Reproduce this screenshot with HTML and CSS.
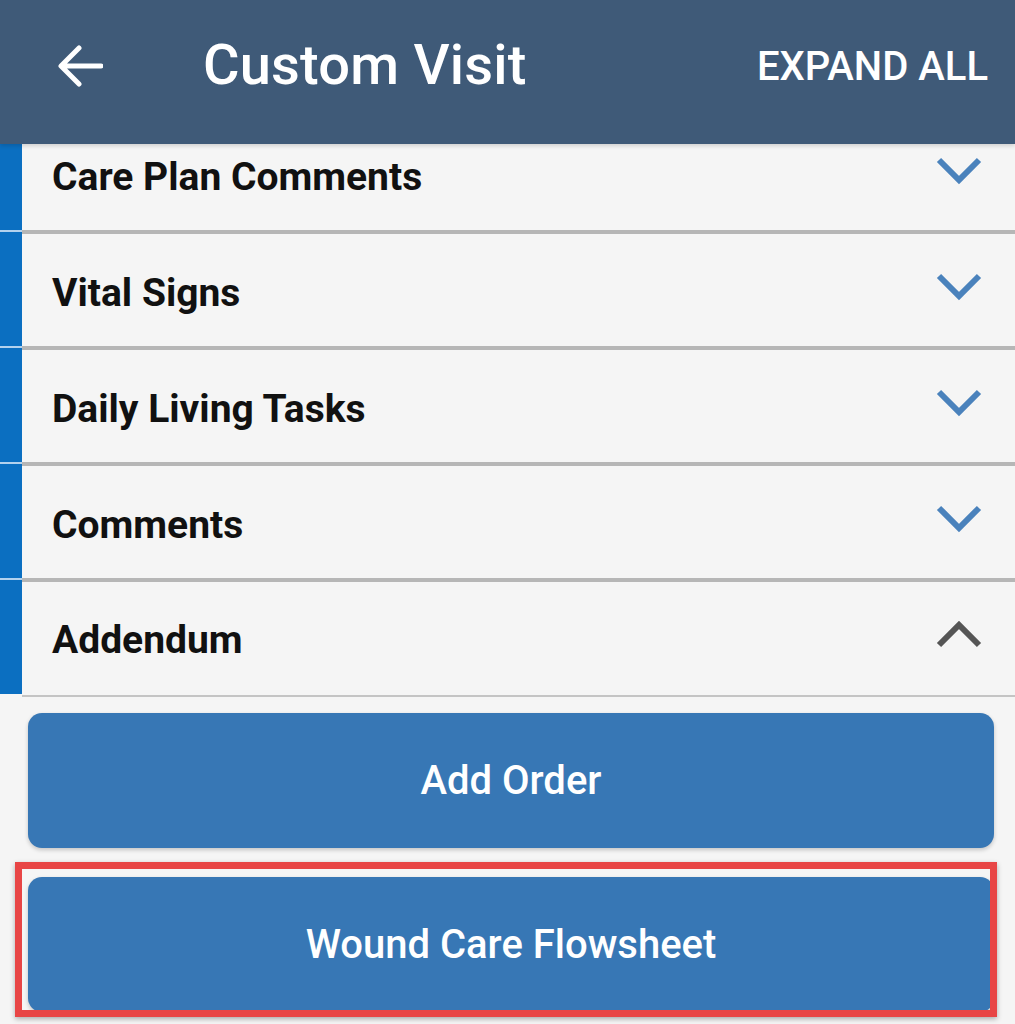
FILE: index.html
```html
<!DOCTYPE html>
<html lang="en">
<head>
  <meta charset="UTF-8">
  <title>Custom Visit</title>
  <link rel="stylesheet" href="styles.css">
</head>
<body>

  <header class="topbar">
    <button class="back" aria-label="Back">
      <svg width="46" height="44" viewBox="0 0 46 44">
        <path d="M44 22H5M22 4L4 22l18 18" fill="none" stroke="#fff" stroke-width="5" stroke-linecap="round" stroke-linejoin="round"/>
      </svg>
    </button>
    <h1 class="title">Custom Visit</h1>
    <span class="expand">EXPAND ALL</span>
  </header>

  <div class="sections">
    <div class="sections-inner">
      <div class="row">
        <div class="mark"></div>
        <div class="row-body">
          <span class="row-title">Care Plan Comments</span>
          <svg class="chev" width="46" height="30" viewBox="0 0 46 30"><path d="M3 4l20 20L43 4" fill="none" stroke="#4a82bc" stroke-width="6"/></svg>
        </div>
      </div>
      <div class="row">
        <div class="mark"></div>
        <div class="row-body">
          <span class="row-title">Vital Signs</span>
          <svg class="chev" width="46" height="30" viewBox="0 0 46 30"><path d="M3 4l20 20L43 4" fill="none" stroke="#4a82bc" stroke-width="6"/></svg>
        </div>
      </div>
      <div class="row">
        <div class="mark"></div>
        <div class="row-body">
          <span class="row-title">Daily Living Tasks</span>
          <svg class="chev" width="46" height="30" viewBox="0 0 46 30"><path d="M3 4l20 20L43 4" fill="none" stroke="#4a82bc" stroke-width="6"/></svg>
        </div>
      </div>
      <div class="row">
        <div class="mark"></div>
        <div class="row-body">
          <span class="row-title">Comments</span>
          <svg class="chev" width="46" height="30" viewBox="0 0 46 30"><path d="M3 4l20 20L43 4" fill="none" stroke="#4a82bc" stroke-width="6"/></svg>
        </div>
      </div>
      <div class="row row-open">
        <div class="mark"></div>
        <div class="row-body">
          <span class="row-title">Addendum</span>
          <svg class="chev" width="46" height="30" viewBox="0 0 46 30"><path d="M3 26L23 6l20 20" fill="none" stroke="#555" stroke-width="6"/></svg>
        </div>
      </div>
    </div>
  </div>

  <div class="actions">
    <button class="action">Add Order</button>
    <button class="action">Wound Care Flowsheet</button>
    <div class="callout"></div>
  </div>

</body>
</html>
```

FILE: styles.css
```css
body {
  font-family: Roboto, 'Noto Sans', sans-serif;
  background: #f5f5f5;
  margin: 0;
  height: 1024px;
  overflow: hidden;
}

.topbar {
  background: #3f5a78;
  height: 144px;
  box-sizing: border-box;
  display: flex;
  align-items: center;
  padding: 0 27px 14px 57px;
  box-shadow: 0 2px 4px rgba(0,0,0,0.15);
  position: relative;
  z-index: 1;
}

.back {
  background: none;
  border: 0;
  padding: 0;
  display: flex;
  margin-top: 2px;
}

.title {
  color: #fff;
  font-size: 56px;
  font-weight: 500;
  margin: 0 0 0 100px;
  flex: 1;
  letter-spacing: 0.2px;
}

.expand {
  color: #fff;
  font-size: 40px;
  font-weight: 500;
  margin-top: 3px;
}

.sections {
  overflow: hidden;
}

.sections-inner {
  margin-top: -26px;
}

.row {
  display: flex;
  height: 116px;
}

.mark {
  width: 22px;
  background: linear-gradient(to bottom, #0b6fc1 112px, #b3d2ee 112px, #b3d2ee 114px, #0b6fc1 114px);
}

.row-body {
  flex: 1;
  display: flex;
  align-items: center;
  justify-content: space-between;
  padding: 6px 33px 0 30px;
  border-bottom: 4px solid #b6b6b6;
}

.row-title {
  font-size: 39px;
  font-weight: 700;
  color: #111;
}

.chev {
  margin-top: -12px;
}

.row-open {
  height: 115px;
}

.row-open .mark {
  background: #0b6fc1;
  margin-bottom: -3px;
  height: 112px;
}

.row-open .row-body {
  border-bottom: 2px solid #c4c4c4;
  padding-top: 2px;
}

.actions {
  position: relative;
  padding: 16px 21px 0 28px;
  display: flex;
  flex-direction: column;
  gap: 29px;
}

.action {
  height: 135px;
  border: 0;
  border-radius: 14px;
  background: #3777b5;
  color: #fff;
  font-family: Roboto, sans-serif;
  font-size: 40px;
  font-weight: 500;
  box-shadow: 0 2px 4px rgba(0,0,0,0.2);
}

.callout {
  position: absolute;
  left: 15px;
  top: 165px;
  width: 968px;
  height: 141px;
  border: 7px solid #e84545;
  box-shadow: 0 2px 5px rgba(0,0,0,0.3);
}
```
